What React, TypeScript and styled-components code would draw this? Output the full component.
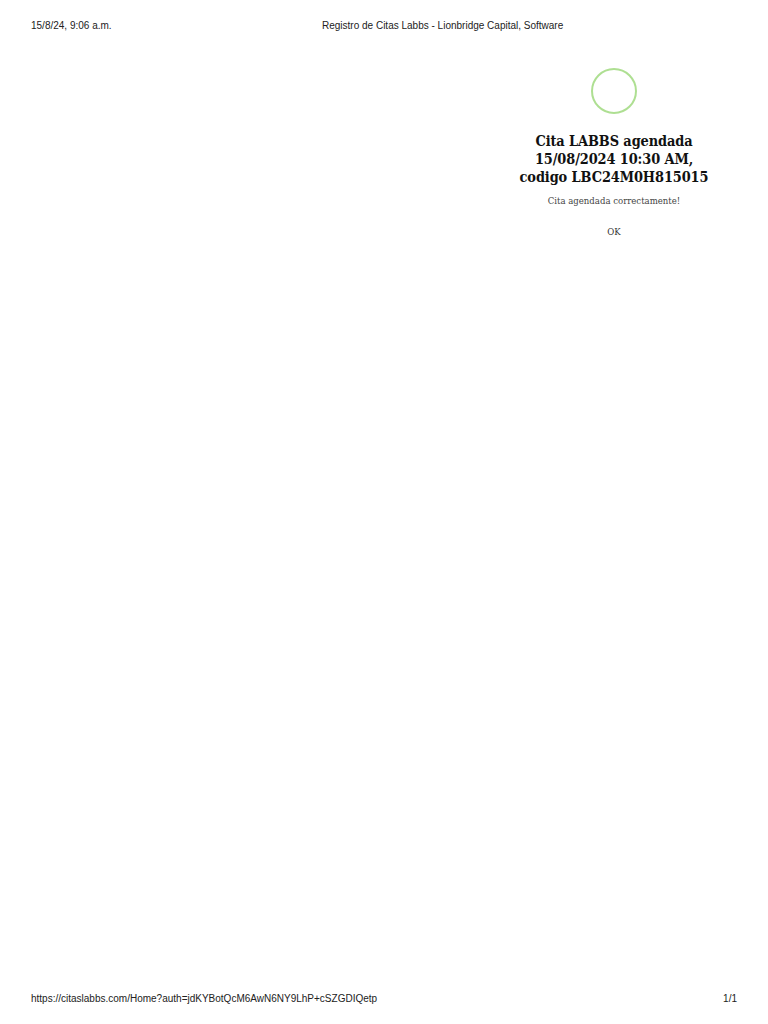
import styled, { createGlobalStyle } from "styled-components"

const GlobalStyle = createGlobalStyle`
    html, body {
        margin: 0;
        padding: 0;
        background: #fff;
    }
    #root {
        height: 1024px;
    }
`
const PageWrap = styled.div`
    width: 768px;
    height: 1024px;
    display: flex;
    flex-direction: column;
    font-family: "Liberation Sans", Arial, sans-serif;
    color: #222;
`
const PrintBar = styled.div`
    display: grid;
    grid-template-columns: 291px 1fr auto;
    align-items: center;
    height: 20px;
    padding: 15px 31px 0 31px;
    font-size: 10px;
`
const FootBar = styled(PrintBar)`
    grid-template-columns: 1fr auto;
    padding: 0 31px 16px 31px;
`
const Main = styled.div`
    flex: 1;
    display: flex;
    justify-content: flex-end;
    padding: 33px 29px 0 0;
`
const Alert = styled.div`
    width: 250px;
    display: flex;
    flex-direction: column;
    align-items: center;
    font-family: "DejaVu Serif Condensed", "DejaVu Serif", "Liberation Serif", serif;
    color: #111;
`
const SuccessRing = styled.div`
    width: 42px;
    height: 42px;
    border: 2px solid #a5dc86;
    border-radius: 50%;
    opacity: 0.9;
`
const AlertTitle = styled.h2`
    margin: 18px 0 0 0;
    font-size: 14.4px;
    line-height: 18px;
    font-weight: bold;
    text-align: center;
    letter-spacing: -0.1px;
`
const AlertText = styled.div`
    margin-top: 9px;
    font-size: 9.5px;
    color: #444;
    text-align: center;
`
const OkButton = styled.div`
    margin-top: 20px;
    font-size: 9.5px;
    color: #333;
`

function App() {
    return (
        <>
            <GlobalStyle />
            <PageWrap>
                <PrintBar>
                    <span>15/8/24, 9:06 a.m.</span>
                    <span>Registro de Citas Labbs - Lionbridge Capital, Software</span>
                    <span />
                </PrintBar>
                <Main>
                    <Alert>
                        <SuccessRing />
                        <AlertTitle>
                            Cita LABBS agendada
                            <br />
                            15/08/2024 10:30 AM,
                            <br />
                            codigo LBC24M0H815015
                        </AlertTitle>
                        <AlertText>Cita agendada correctamente!</AlertText>
                        <OkButton>OK</OkButton>
                    </Alert>
                </Main>
                <FootBar>
                    <span>https://citaslabbs.com/Home?auth=jdKYBotQcM6AwN6NY9LhP+cSZGDIQetp</span>
                    <span>1/1</span>
                </FootBar>
            </PageWrap>
        </>
    )
}
export default App
